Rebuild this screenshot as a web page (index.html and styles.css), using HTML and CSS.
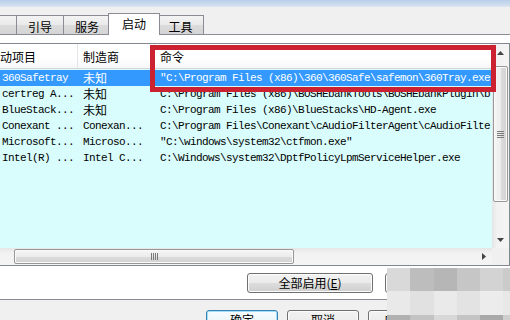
FILE: index.html
```html
<!DOCTYPE html>
<html>
<head>
<meta charset="utf-8">
<link rel="stylesheet" href="styles.css">
</head>
<body>
<div class="frame"></div>
<div class="dialog">
  <div class="tabs">
    <div class="tab tab-w0"></div>
    <div class="tab tab-w1">引导</div>
    <div class="tab tab-w1">服务</div>
    <div class="tab tab-w2 active">启动</div>
    <div class="tab tab-w3">工具</div>
  </div>
  <div class="panel">
    <div class="list">
      <div class="content">
        <div class="head">
          <div class="c1">启动项目</div>
          <div class="c2">制造商</div>
          <div class="c3">命令</div>
        </div>
        <div class="rows">
          <div class="row sel">
            <div class="c1">360Safetray</div>
            <div class="c2"><span class="cjk">未知</span></div>
            <div class="c3">"C:\Program Files (x86)\360\360Safe\safemon\360Tray.exe"</div>
          </div>
          <div class="row">
            <div class="c1">certreg A...</div>
            <div class="c2"><span class="cjk">未知</span></div>
            <div class="c3">C:\Program Files (x86)\BOSHEbankTools\BOSHEbankPlugin\b...</div>
          </div>
          <div class="row">
            <div class="c1">BlueStack...</div>
            <div class="c2"><span class="cjk">未知</span></div>
            <div class="c3">C:\Program Files (x86)\BlueStacks\HD-Agent.exe</div>
          </div>
          <div class="row">
            <div class="c1">Conexant ...</div>
            <div class="c2">Conexan...</div>
            <div class="c3">C:\Program Files\Conexant\cAudioFilterAgent\cAudioFilte...</div>
          </div>
          <div class="row">
            <div class="c1">Microsoft...</div>
            <div class="c2">Microso...</div>
            <div class="c3">"C:\windows\system32\ctfmon.exe"</div>
          </div>
          <div class="row">
            <div class="c1">Intel(R) ...</div>
            <div class="c2">Intel C...</div>
            <div class="c3">C:\Windows\system32\DptfPolicyLpmServiceHelper.exe</div>
          </div>
        </div>
      </div>
      <div class="vscroll">
        <div class="sbtn"><svg width="7" height="4" viewBox="0 0 7 4"><polygon points="0,4 7,4 3.5,0" fill="#444"/></svg></div>
        <div class="vtrack"><div class="vthumb"><span class="grip-h"></span></div></div>
        <div class="sbtn"><svg width="7" height="4" viewBox="0 0 7 4"><polygon points="0,0 7,0 3.5,4" fill="#444"/></svg></div>
      </div>
      <div class="hscroll">
        <div class="sbtn"><svg width="4" height="7" viewBox="0 0 4 7"><polygon points="4,0 4,7 0,3.5" fill="#444"/></svg></div>
        <div class="htrack"><div class="hthumb"><span class="grip-v"></span></div></div>
        <div class="sbtn"><svg width="4" height="7" viewBox="0 0 4 7"><polygon points="0,0 0,7 4,3.5" fill="#444"/></svg></div>
      </div>
      <div class="corner"></div>
    </div>
    <div class="panel-buttons">
      <button class="btn wide">全部启用(<u>E</u>)</button>
      <button class="btn wide">全部禁用(<u>D</u>)</button>
    </div>
  </div>
  <div class="footer">
    <button class="btn default">确定</button>
    <button class="btn">取消</button>
    <button class="btn">应用(<u>A</u>)</button>
  </div>
</div>
<div class="redbox"></div>
<div class="mosaic">
  <i class="m1"></i><i class="m2"></i><i class="m3"></i><i class="m4"></i><i class="m5"></i><i class="m6"></i>
  <i class="m7"></i><i class="m8"></i><i class="m9"></i><i class="m10"></i><i class="m11"></i><i class="m12"></i>
  <i class="m13"></i><i class="m14"></i><i class="m15"></i><i class="m16"></i><i class="m17"></i><i class="m18"></i>
</div>
</body>
</html>
```

FILE: styles.css
```css
* { box-sizing: border-box; }
html, body {
  margin: 0;
  padding: 0;
  width: 510px;
  height: 320px;
  overflow: hidden;
  background: #f0f0f0;
  font-family: "Noto Sans CJK SC", sans-serif;
  font-size: 12px;
  color: #000;
}
.frame {
  height: 7px;
  background: linear-gradient(#b9cfe8, #cddcee 70%, #dfe8f3);
}
.dialog {
  padding-top: 6px;
  background: #f0f0f0;
}
.tabs {
  display: flex;
  align-items: flex-end;
  height: 21px;
  margin-left: -31px;
}
.tab {
  height: 19px;
  border: 1px solid #898c95;
  border-bottom: none;
  margin-right: -1px;
  background: linear-gradient(#f4f4f4, #e9e9e9 50%, #dcdcdc 51%, #d4d4d4);
  text-align: center;
  line-height: 19px;
  padding-top: 1px;
  font-size: 12px;
}
.tab-w0 { width: 48px; }
.tab-w1 { width: 48px; }
.tab-w2 { width: 52px; }
.tab-w3 { width: 46px; }
.tab.active {
  height: 22px;
  margin-bottom: -1px;
  margin-left: -2px;
  margin-right: -2px;
  position: relative;
  z-index: 1;
  background: #fff;
  line-height: 20px;
  padding-top: 0;
}
.tab.active + .tab { border-left: none; }
.panel {
  background: #fff;
  border-top: 1px solid #898c95;
  border-bottom: 1px solid #898c95;
  padding-top: 8px;
  height: 266px;
}
.list {
  margin-left: -18px;
  width: 528px;
  height: 223px;
  border: 1px solid #828790;
  display: grid;
  grid-template-columns: 509px 17px;
  grid-template-rows: 204px 17px;
}
.content {
  background: #d9fcfc;
  overflow: hidden;
}
.head {
  display: flex;
  height: 25px;
  background: linear-gradient(#ffffff, #ffffff 60%, #f6f7f9);
  border-bottom: 1px solid #d5d5d5;
}
.head > div {
  border-right: 1px solid #e3e5e8;
  padding-left: 5px;
  padding-top: 5px;
  line-height: 16px;
  white-space: nowrap;
}
.c1 { width: 95px; flex: none; overflow: hidden; }
.c2 { width: 77px; flex: none; overflow: hidden; }
.c3 { flex: 1; overflow: hidden; white-space: nowrap; }
.rows { padding-top: 1px; }
.row {
  display: flex;
  height: 16px;
  line-height: 16px;
  font-family: "Liberation Mono", "Noto Sans CJK SC", monospace;
  font-size: 11px;
  letter-spacing: -0.6px;
  white-space: nowrap;
}
.row .c1 { padding-left: 19px; }
.row .c2 { padding-left: 5px; }
.row .c3 { padding-left: 5px; }
.row.sel { background: #3399ff; color: #fff; }
.cjk {
  font-family: "Noto Sans CJK SC", sans-serif;
  font-size: 12px;
  letter-spacing: 0;
}
.vscroll {
  display: flex;
  flex-direction: column;
  background: linear-gradient(90deg, #e6e6e6, #f2f2f2 30%, #f4f4f4);
}
.hscroll {
  display: flex;
  background: linear-gradient(#e6e6e6, #f2f2f2 30%, #f4f4f4);
}
.sbtn {
  width: 17px;
  height: 17px;
  flex: none;
  display: flex;
  align-items: center;
  justify-content: center;
}
.vtrack { flex: 1; padding-top: 5px; }
.vthumb {
  margin-left: 1px;
  width: 15px;
  height: 136px;
  border: 1px solid #979797;
  border-radius: 2px;
  background: linear-gradient(90deg, #f6f6f6, #ececec 50%, #dcdcdc 51%, #d2d2d2);
  box-shadow: inset 0 0 0 1px #fafafa;
  display: flex;
  align-items: center;
  justify-content: center;
}
.grip-h {
  width: 7px;
  height: 7px;
  background: repeating-linear-gradient(#7a7a7a 0 1px, transparent 1px 2px);
}
.htrack { flex: 1; padding-left: 14px; }
.hthumb {
  margin-top: 1px;
  width: 280px;
  height: 15px;
  border: 1px solid #979797;
  border-radius: 2px;
  background: linear-gradient(#f6f6f6, #ececec 50%, #dcdcdc 51%, #d2d2d2);
  box-shadow: inset 0 0 0 1px #fafafa;
  display: flex;
  align-items: center;
  justify-content: center;
}
.grip-v {
  width: 7px;
  height: 7px;
  background: repeating-linear-gradient(90deg, #7a7a7a 0 1px, transparent 1px 2px);
}
.corner { background: #f0f0f0; }
.panel-buttons {
  display: flex;
  gap: 12px;
  padding-left: 247px;
  margin-top: 7px;
}
.btn {
  flex: none;
  height: 20px;
  border: 1px solid #707070;
  border-radius: 3px;
  background: linear-gradient(#f2f2f2, #ebebeb 50%, #dddddd 51%, #cfcfcf);
  box-shadow: inset 0 0 0 1px #fcfcfc;
  font-family: "Noto Sans CJK SC", sans-serif;
  font-size: 12px;
  line-height: 16px;
  padding: 0;
  color: #000;
}
.btn.wide { width: 126px; }
.footer {
  display: flex;
  gap: 9px;
  padding-left: 206px;
  padding-top: 10px;
}
.footer .btn {
  width: 72px;
  height: 23px;
  line-height: 16px;
  padding-bottom: 3px;
}
.footer .btn.default {
  border-color: #3c7fb1;
  box-shadow: inset 0 0 0 1px #9ee0f8;
  background: linear-gradient(#f6fbfe, #eef6fb 50%, #e2eef7 51%, #d9e8f3);
}
.redbox {
  position: absolute;
  left: 150px;
  top: 45px;
  width: 346px;
  height: 47px;
  border: 5px solid #cc2131;
}
.mosaic {
  position: absolute;
  left: 387px;
  top: 268px;
  display: grid;
  grid-template-columns: repeat(6, 23.3px);
  grid-template-rows: repeat(3, 23.3px);
}
.mosaic i { display: block; }
.m1 { background: #d9d9d9; }
.m2 { background: #bdbdbd; }
.m3 { background: #b6b6b6; }
.m4 { background: #c6c6c6; }
.m5 { background: #d3d3d3; }
.m6 { background: #cbcbcb; }
.m7 { background: #e9e9e9; }
.m8 { background: #e1e1e1; }
.m9 { background: #eaeaea; }
.m10 { background: #e3e3e3; }
.m11 { background: #ececec; }
.m12 { background: #e8e8e8; }
.m13 { background: #b0b0b0; }
.m14 { background: #c3c3c3; }
.m15 { background: #d8d8d8; }
.m16 { background: #c4c4c4; }
.m17 { background: #a9a9a9; }
.m18 { background: #cfcfcf; }
```
